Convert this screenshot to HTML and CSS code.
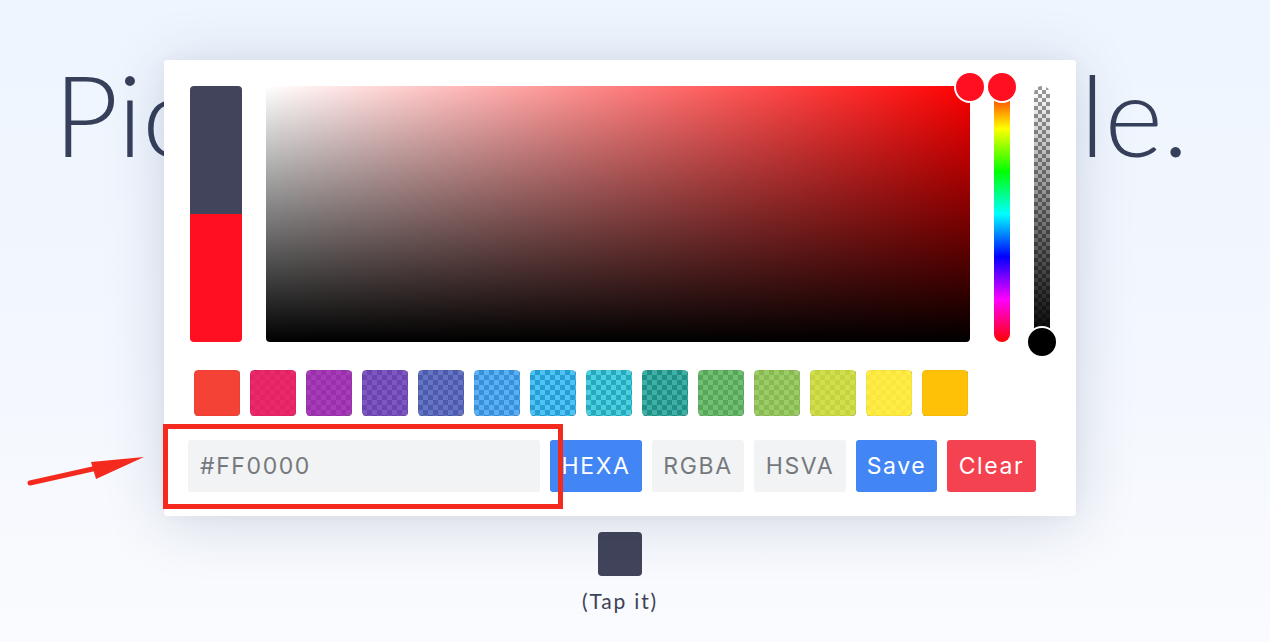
FILE: index.html
```html
<!DOCTYPE html>
<html lang="en">
<head>
<meta charset="utf-8">
<title>Pickr</title>
<link rel="stylesheet" href="styles.css">
</head>
<body>
<main class="page">
  <h1 class="title">Pickr - simple, hackable.</h1>
  <button class="trigger" aria-label="Open color picker"></button>
  <p class="hint">(Tap it)</p>
</main>

<div class="pcr-app">
  <div class="pcr-selection">
    <div class="pcr-preview">
      <div class="pcr-last"></div>
      <div class="pcr-current"></div>
    </div>
    <div class="pcr-palette">
      <span class="handle handle-palette"></span>
    </div>
    <div class="pcr-hue">
      <span class="handle handle-hue"></span>
    </div>
    <div class="pcr-opacity">
      <span class="handle handle-opacity"></span>
    </div>
  </div>

  <div class="pcr-swatches">
    <button class="swatch"><span style="background: rgba(244,67,54,1)"></span></button>
    <button class="swatch"><span style="background: rgba(233,30,99,0.95)"></span></button>
    <button class="swatch"><span style="background: rgba(156,39,176,0.9)"></span></button>
    <button class="swatch"><span style="background: rgba(103,58,183,0.85)"></span></button>
    <button class="swatch"><span style="background: rgba(63,81,181,0.8)"></span></button>
    <button class="swatch"><span style="background: rgba(33,150,243,0.75)"></span></button>
    <button class="swatch"><span style="background: rgba(3,169,244,0.7)"></span></button>
    <button class="swatch"><span style="background: rgba(0,188,212,0.7)"></span></button>
    <button class="swatch"><span style="background: rgba(0,150,136,0.75)"></span></button>
    <button class="swatch"><span style="background: rgba(76,175,80,0.8)"></span></button>
    <button class="swatch"><span style="background: rgba(139,195,74,0.85)"></span></button>
    <button class="swatch"><span style="background: rgba(205,220,57,0.9)"></span></button>
    <button class="swatch"><span style="background: rgba(255,235,59,0.95)"></span></button>
    <button class="swatch"><span style="background: rgba(255,193,7,1)"></span></button>
  </div>

  <div class="pcr-interaction">
    <input class="pcr-result" type="text" value="#FF0000" spellcheck="false">
    <button class="pcr-btn pcr-type is-active w-hexa">HEXA</button>
    <button class="pcr-btn pcr-type w-rgba">RGBA</button>
    <button class="pcr-btn pcr-type w-hsva">HSVA</button>
    <button class="pcr-btn pcr-save">Save</button>
    <button class="pcr-btn pcr-clear">Clear</button>
  </div>
</div>

<div class="annotation-box"></div>
<svg class="annotation-arrow" width="130" height="40" viewBox="0 0 130 40" aria-hidden="true">
  <line x1="4" y1="30" x2="80" y2="13" stroke="#f42a1e" stroke-width="5" stroke-linecap="round"/>
  <polygon points="118,4 65,9 70,26" fill="#f42a1e"/>
</svg>
</body>
</html>
```

FILE: styles.css
```css
* { box-sizing: border-box; }

html, body {
  margin: 0;
  height: 100%;
}

body {
  width: 1270px;
  height: 642px;
  overflow: hidden;
  position: relative;
  background: linear-gradient(to bottom, #eef5fe 0%, #f3f7fe 55%, #fafbfe 100%);
  font-family: "Lato", "Inter", sans-serif;
  color: #36405a;
}

.page {
  display: flex;
  flex-direction: column;
  align-items: center;
  padding-right: 30px;
}

.title {
  margin: 0;
  padding-top: 58px;
  padding-left: 2px;
  width: 100%;
  text-align: center;
  font-family: "Lato", sans-serif;
  font-weight: 300;
  font-size: 112px;
  line-height: 112px;
  letter-spacing: -0.4px;
  color: #36405a;
  white-space: nowrap;
}

.trigger {
  margin-top: 362px;
  width: 44px;
  height: 44px;
  border: 0;
  padding: 0;
  border-radius: 4px;
  background: #41445a;
}

.hint {
  margin: 12px 0 0;
  font-family: "Lato", sans-serif;
  font-size: 21px;
  line-height: 26px;
  letter-spacing: 1.8px;
  color: #3e4256;
}

/* ---------- Picker popup ---------- */
.pcr-app {
  position: absolute;
  left: 164px;
  top: 60px;
  width: 912px;
  height: 456px;
  padding: 26px;
  background: #fff;
  border-radius: 3px;
  box-shadow: 0 6px 60px rgba(30, 50, 90, 0.17), 0 0 16px rgba(0, 0, 0, 0.03);
  font-family: "Inter", "Liberation Sans", sans-serif;
}

.pcr-selection {
  display: flex;
  gap: 24px;
  height: 256px;
}

.pcr-preview {
  width: 52px;
  display: flex;
  flex-direction: column;
  border-radius: 4px;
  overflow: hidden;
}
.pcr-last { flex: 1; background: #41445a; }
.pcr-current { flex: 1; background: #ff0f1f; }

.pcr-palette {
  position: relative;
  width: 704px;
  border-radius: 4px;
  background:
    linear-gradient(to top, #000, rgba(0,0,0,0)),
    linear-gradient(to right, #fff, #ff0000);
}

.pcr-hue,
.pcr-opacity {
  position: relative;
  width: 16px;
  border-radius: 8px;
}

.pcr-hue {
  background: linear-gradient(to bottom,
    #ff0000 0%, #ffff00 16.66%, #00ff00 33.33%, #00ffff 50%,
    #0000ff 66.66%, #ff00ff 83.33%, #ff0000 100%);
}

.pcr-opacity {
  background:
    linear-gradient(to bottom, rgba(0,0,0,0), #000),
    repeating-conic-gradient(#9a9a9a 0% 25%, #fff 0% 50%) 0 0 / 8px 8px;
}

.handle {
  position: absolute;
  width: 32px;
  height: 32px;
  border-radius: 50%;
  border: 2px solid #fff;
  transform: translate(-50%, -50%);
}
.handle-palette { left: 100%; top: 1px; background: #ff0f1f; }
.handle-hue { left: 50%; top: 1px; background: #ff0f1f; }
.handle-opacity { left: 50%; top: 100%; background: #000; }

.pcr-swatches {
  display: flex;
  gap: 10px;
  margin-top: 28px;
  padding-left: 4px;
}

.swatch {
  position: relative;
  width: 46px;
  height: 46px;
  padding: 0;
  border: 0;
  border-radius: 4px;
  overflow: hidden;
  background: repeating-conic-gradient(#808080 0% 25%, #fff 0% 50%) 0 0 / 10px 10px;
}
.swatch span {
  position: absolute;
  inset: 0;
  border-radius: 4px;
  box-shadow: inset 0 0 0 1px rgba(0,0,0,0.03);
}

.pcr-interaction {
  display: flex;
  gap: 10px;
  margin-top: 24px;
  margin-left: -2px;
  height: 52px;
}

.pcr-result {
  width: 352px;
  height: 52px;
  border: 0;
  border-radius: 3px;
  padding: 0 12px;
  background: #f1f3f4;
  color: #75797e;
  font-family: "Inter", "Liberation Sans", sans-serif;
  font-size: 23px;
  letter-spacing: 1.6px;
  outline: none;
}

.pcr-btn {
  height: 52px;
  border: 0;
  border-radius: 3px;
  padding: 0;
  font-family: "Inter", "Liberation Sans", sans-serif;
  font-size: 23px;
  letter-spacing: 1.6px;
  text-align: center;
}

.pcr-type {
  background: #f1f3f4;
  color: #75797e;
}
.pcr-type.is-active {
  background: #4285f4;
  color: #fff;
}
.w-hexa { width: 92px; }
.w-rgba { width: 92px; }
.w-hsva { width: 92px; }

.pcr-save {
  width: 81px;
  background: #4285f4;
  color: #fff;
}
.pcr-clear {
  width: 89px;
  background: #f44250;
  color: #fff;
}

/* ---------- Annotations ---------- */
.annotation-box {
  position: absolute;
  left: 163px;
  top: 424px;
  width: 400px;
  height: 85px;
  border: 5px solid #f42a1e;
}

.annotation-arrow {
  position: absolute;
  left: 26px;
  top: 453px;
}
```
